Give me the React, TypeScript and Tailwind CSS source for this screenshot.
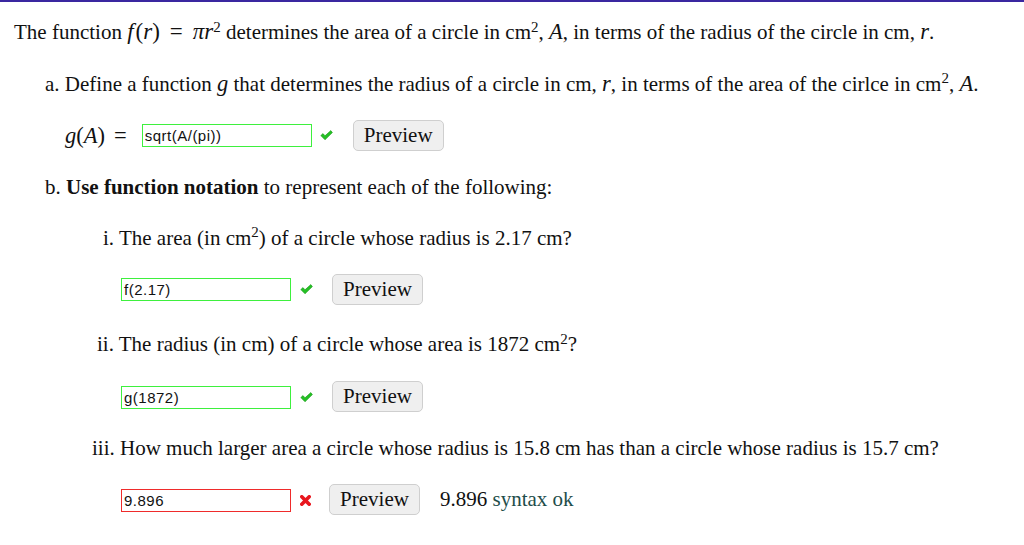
import React from 'react';

const serif = { fontFamily: '"Liberation Serif", "Times New Roman", serif' };

function Check() {
  return (
    <svg width="13" height="11" viewBox="0 0 13 11" className="shrink-0">
      <path d="M0.8 5.6 L3 3.6 L5 5.8 L10.8 0.6 L12.4 2.6 L5 9.8 Z" fill="#25c025" stroke="#1a9a1a" strokeWidth="0.6" strokeLinejoin="round" />
    </svg>
  );
}

function Cross() {
  return (
    <svg width="11" height="11" viewBox="0 0 11 11" className="shrink-0">
      <path d="M1.8 1.8 L9.2 9.2 M9.2 1.8 L1.8 9.2" fill="none" stroke="#e8161e" strokeWidth="3.6" strokeLinecap="round" />
    </svg>
  );
}

function Answer({ value, ok }: { value: string; ok: boolean }) {
  return (
    <div
      className={`w-[170px] h-[23px] bg-white border-[1.5px] ${ok ? 'border-[#3ef03e]' : 'border-[#ef2b2b]'} flex items-center pl-[2px] text-[15px] tracking-[0.5px] text-[#111] leading-none`}
      style={{ fontFamily: '"Liberation Sans", Arial, sans-serif' }}
    >
      {value}
    </div>
  );
}

function PreviewBtn() {
  return (
    <button className="w-[91px] h-[31px] rounded-[5px] border border-[#cfcfcf] bg-[#efefef] text-[21px] text-[#111] leading-none">
      Preview
    </button>
  );
}

// math italics render a touch larger, like MathJax output
const I = ({ children }: { children: React.ReactNode }) => <i className="italic text-[22.5px]">{children}</i>;
const Sup = ({ children }: { children: React.ReactNode }) => <sup className="text-[15px]">{children}</sup>;

function TextRow({ h, pl, children }: { h: string; pl: string; children: React.ReactNode }) {
  return (
    <div className={`${h} ${pl} flex items-center`}>
      <span className="whitespace-nowrap">{children}</span>
    </div>
  );
}

export default function App() {
  return (
    <div className="w-[1024px] h-[545px] bg-white text-[#111] text-[21px] overflow-hidden" style={serif}>
      <div className="h-[2px] bg-[#3a27a0]" />
      <div className="h-[5px]" />

      <TextRow h="h-[51px]" pl="pl-[14px]">
        The function{' '}
        <span className="text-[23px]">
          <i className="italic">f</i>
          <span className="ml-[2px]">(</span>
          <i className="italic">r</i>)<span className="mx-[10px]">=</span>
          <i className="italic">πr</i>
          <sup className="text-[15px]">2</sup>
        </span>{' '}
        determines the area of a circle in cm<Sup>2</Sup>, <I>A</I>, in terms of the radius of the circle in cm, <I>r</I>.
      </TextRow>

      <TextRow h="h-[51px]" pl="pl-[45px]">
        a. Define a function <I>g</I> that determines the radius of a circle in cm, <I>r</I>, in terms of the area of the cirlce in cm
        <Sup>2</Sup>, <I>A</I>.
      </TextRow>

      <div className="h-[53px] flex items-center pl-[65px]">
        <span className="whitespace-nowrap text-[22.5px]">
          <i className="italic">g</i>(<i className="italic">A</i>)<span className="ml-[9px]">=</span>
        </span>
        <div className="ml-[15px]">
          <Answer value="sqrt(A/(pi))" ok />
        </div>
        <div className="ml-[8px]">
          <Check />
        </div>
        <div className="ml-[20px]">
          <PreviewBtn />
        </div>
      </div>

      <TextRow h="h-[51px]" pl="pl-[45px]">
        b. <b className="font-bold">Use function notation</b> to represent each of the following:
      </TextRow>

      <TextRow h="h-[51px]" pl="pl-[103px]">
        i. The area (in cm<Sup>2</Sup>) of a circle whose radius is 2.17 cm?
      </TextRow>

      <div className="h-[51px] flex items-center pl-[121px]">
        <Answer value="f(2.17)" ok />
        <div className="ml-[9px]">
          <Check />
        </div>
        <div className="ml-[19px]">
          <PreviewBtn />
        </div>
      </div>

      <TextRow h="h-[60px]" pl="pl-[97px]">
        ii. The radius (in cm) of a circle whose area is 1872 cm<Sup>2</Sup>?
      </TextRow>

      <div className="h-[44px] flex items-center pl-[121px]">
        <Answer value="g(1872)" ok />
        <div className="ml-[9px]">
          <Check />
        </div>
        <div className="ml-[19px]">
          <PreviewBtn />
        </div>
      </div>

      <TextRow h="h-[60px]" pl="pl-[92px]">
        iii. How much larger area a circle whose radius is 15.8 cm has than a circle whose radius is 15.7 cm?
      </TextRow>

      <div className="h-[42px] flex items-center pl-[121px] whitespace-nowrap">
        <Answer value="9.896" ok={false} />
        <div className="ml-[9px]">
          <Cross />
        </div>
        <div className="ml-[18px]">
          <PreviewBtn />
        </div>
        <span className="ml-[20px]">
          9.896 <span className="text-[#1e4d4a]">syntax ok</span>
        </span>
      </div>
    </div>
  );
}
